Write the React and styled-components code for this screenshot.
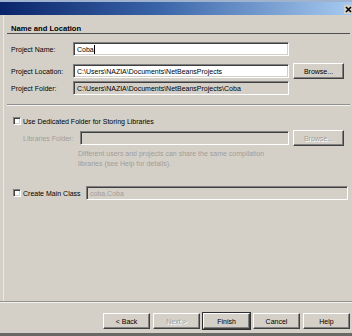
import React from 'react';
import styled, { createGlobalStyle, css } from 'styled-components';

const Global = createGlobalStyle`
  html, body { margin: 0; padding: 0; background: #d4d0c8; }
  body { font-family: "Liberation Sans", Arial, sans-serif; font-size: 7px; color: #000; }
`;

const sunken = css`
  box-sizing: border-box;
  border: 1px solid;
  border-color: #808080 #ffffff #ffffff #808080;
  box-shadow: inset 1px 1px 0 #404040, inset -1px -1px 0 #d4d0c8;
`;

const raised = css`
  box-sizing: border-box;
  border: 1px solid;
  border-color: #ffffff #404040 #404040 #ffffff;
  box-shadow: inset -1px -1px 0 #808080;
`;

const Window = styled.div`
  width: 352px;
  height: 336px;
  display: flex;
  flex-direction: column;
  background: #d4d0c8;
  overflow: hidden;
`;

const TitleBar = styled.div`
  height: 15px;
  flex: none;
  display: flex;
  align-items: center;
  justify-content: flex-end;
  background: linear-gradient(to right, #0a246a 0%, #3a64a8 45%, #a6caf0 100%);
  border-top: 2px solid #9fb3cf;
  box-sizing: border-box;
`;

const Close = styled.div`
  width: 8px;
  height: 9px;
  margin-top: 1px;
  background: #d4d0c8;
  display: flex;
  align-items: center;
  justify-content: center;
`;

const Body = styled.div`
  flex: 1;
  display: flex;
  flex-direction: column;
  padding: 0 2px 0 3px;
  margin-left: 3px;
  border-left: 1px solid #ece9e2;
`;

const Header = styled.div`
  margin-top: 9px;
  height: 9px;
  line-height: 9px;
  font-weight: bold;
  font-size: 7.6px;
  padding-left: 4px;
  border-bottom: 1px solid #505050;
`;

const Row = styled.div`
  display: flex;
  align-items: center;
  height: ${(p) => p.$h || 16}px;
  margin-top: ${(p) => p.$mt || 0}px;
  padding-left: ${(p) => p.$pl ?? 4}px;
`;

const Label = styled.div`
  width: ${(p) => (p.$w ? `${p.$w}px` : 'auto')};
  flex: none;
  color: ${(p) => (p.$disabled ? '#a09d98' : '#000')};
  white-space: nowrap;
`;

const Field = styled.div`
  ${sunken};
  width: ${(p) => p.$w}px;
  height: 14px;
  flex: none;
  display: flex;
  align-items: center;
  padding-left: 3px;
  background: ${(p) => (p.$white ? '#ffffff' : '#d4d0c8')};
  color: ${(p) => (p.$disabled ? '#a09d98' : '#000')};
  white-space: nowrap;
  overflow: hidden;
`;

const Caret = styled.span`
  display: inline-block;
  width: 1px;
  height: 9px;
  background: #000;
  margin-left: 0.5px;
`;

const Gap = styled.span`
  width: ${(p) => p.$w}px;
  flex: none;
`;

const Button = styled.div`
  ${raised};
  width: ${(p) => p.$w || 47}px;
  height: 16px;
  flex: none;
  display: flex;
  align-items: center;
  justify-content: center;
  color: ${(p) => (p.$disabled ? '#a09d98' : '#000')};
  text-shadow: ${(p) => (p.$disabled ? '1px 1px 0 #fff' : 'none')};
  ${(p) =>
    p.$default &&
    css`
      outline: 1px solid #303030;
    `}
`;

const Separator = styled.div`
  margin-top: ${(p) => p.$mt}px;
  height: 1px;
  background: #909090;
  box-shadow: 0 1px 0 #f4f2ee;
`;

const Check = styled.div`
  ${sunken};
  width: 8px;
  height: 8px;
  flex: none;
  background: #fff;
  margin-left: 6px;
  margin-right: 2px;
`;

const Hint = styled.div`
  margin-top: 3px;
  padding-left: 71px;
  line-height: 10px;
  color: #a09d98;
`;

const Footer = styled.div`
  flex: none;
  height: 35px;
  border-top: 1px solid #909090;
  box-shadow: inset 0 1px 0 #f4f2ee;
  display: flex;
  justify-content: flex-end;
  align-items: flex-start;
  gap: 3px;
  padding: 11px 2px 0 0;
  box-sizing: border-box;
  border-bottom: 3px solid #6a6864;
`;

export default function App() {
  return (
    <>
      <Global />
      <Window>
        <TitleBar>
          <Close>
            <svg width="7" height="7" viewBox="0 0 7 7">
              <path d="M1 1 L6 6 M6 1 L1 6" stroke="#000" strokeWidth="1.6" />
            </svg>
          </Close>
        </TitleBar>
        <Body>
          <Header>Name and Location</Header>
          <Row $mt={8} $h={14}>
            <Label $w={62}>Project Name:</Label>
            <Field $w={216} $white>
              Coba<Caret />
            </Field>
          </Row>
          <Row $mt={7}>
            <Label $w={62}>Project Location:</Label>
            <Field $w={216} $white>
              C:\Users\NAZIA\Documents\NetBeansProjects
            </Field>
            <Gap $w={4} />
            <Button $w={51}>Browse...</Button>
          </Row>
          <Row $mt={2} $h={14}>
            <Label $w={62}>Project Folder:</Label>
            <Field $w={216}>C:\Users\NAZIA\Documents\NetBeansProjects\Coba</Field>
          </Row>
          <Separator $mt={9} />
          <Row $mt={11} $h={10} $pl={0}>
            <Check />
            <Label>Use Dedicated Folder for Storing Libraries</Label>
          </Row>
          <Row $mt={4} $pl={16}>
            <Label $w={57} $disabled>
              Libraries Folder:
            </Label>
            <Field $w={209} />
            <Gap $w={4} />
            <Button $w={51} $disabled>
              Browse...
            </Button>
          </Row>
          <Hint>
            Different users and projects can share the same compilation
            <br />
            libraries (see Help for details).
          </Hint>
          <Row $mt={16} $pl={0}>
            <Check />
            <Label $w={63}>Create Main Class</Label>
            <Field $w={262} $disabled>
              coba.Coba
            </Field>
          </Row>
        </Body>
        <Footer>
          <Button>&lt; Back</Button>
          <Button $disabled>Next &gt;</Button>
          <Button $default>Finish</Button>
          <Button>Cancel</Button>
          <Button>Help</Button>
        </Footer>
      </Window>
    </>
  );
}
